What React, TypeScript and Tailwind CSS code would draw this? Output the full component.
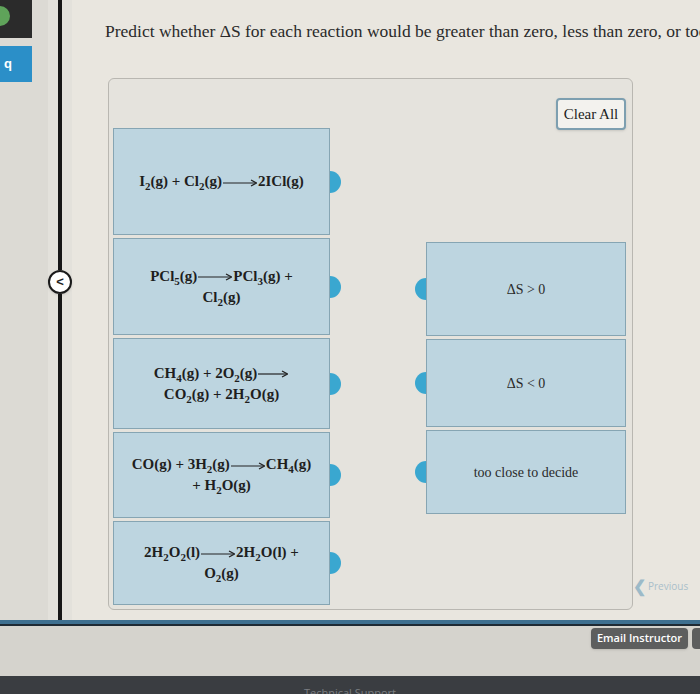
import React from "react";

function Arrow({ w = 34 }: { w?: number }) {
  return (
    <svg width={w} height="8" viewBox={`0 0 ${w} 8`} className="inline-block mx-[1px] align-middle">
      <line x1="0" y1="4" x2={w - 1} y2="4" stroke="#222" strokeWidth="1.2" />
      <path d={`M${w - 6} 1 L${w - 0.5} 4 L${w - 6} 7`} fill="none" stroke="#222" strokeWidth="1.2" />
    </svg>
  );
}

const Sub = ({ children }: { children: React.ReactNode }) => (
  <span className="text-[11px] relative top-[4px] leading-none">{children}</span>
);

type Item = { h: number; body: React.ReactNode };

const reactions: Item[] = [
  {
    h: 107,
    body: (
      <div>
        I<Sub>2</Sub>(g) + Cl<Sub>2</Sub>(g)
        <Arrow />
        2ICl(g)
      </div>
    ),
  },
  {
    h: 97,
    body: (
      <>
        <div>
          PCl<Sub>5</Sub>(g)
          <Arrow />
          PCl<Sub>3</Sub>(g) +
        </div>
        <div>
          Cl<Sub>2</Sub>(g)
        </div>
      </>
    ),
  },
  {
    h: 91,
    body: (
      <>
        <div>
          CH<Sub>4</Sub>(g) + 2O<Sub>2</Sub>(g)
          <Arrow w={30} />
        </div>
        <div>
          CO<Sub>2</Sub>(g) + 2H<Sub>2</Sub>O(g)
        </div>
      </>
    ),
  },
  {
    h: 86,
    body: (
      <>
        <div>
          CO(g) + 3H<Sub>2</Sub>(g)
          <Arrow />
          CH<Sub>4</Sub>(g)
        </div>
        <div>
          + H<Sub>2</Sub>O(g)
        </div>
      </>
    ),
  },
  {
    h: 84,
    body: (
      <>
        <div>
          2H<Sub>2</Sub>O<Sub>2</Sub>(l)
          <Arrow />
          2H<Sub>2</Sub>O(l) +
        </div>
        <div>
          O<Sub>2</Sub>(g)
        </div>
      </>
    ),
  },
];

const targets = [
  { h: 94, label: "ΔS > 0" },
  { h: 88, label: "ΔS < 0" },
  { h: 84, label: "too close to decide" },
];

export default function App() {
  return (
    <div className="w-[700px] h-[694px] flex flex-col overflow-hidden bg-[#e9e6df] font-['Liberation_Serif',serif]">
      <div className="flex h-[620px]">
        {/* sidebar */}
        <div className="w-[48px] flex flex-col bg-[#dcdad4]">
          <div className="w-[32px] h-[38px] bg-[#2b2b2b] flex items-start">
            <div className="w-[10px] h-[20px] mt-[6px] rounded-r-full bg-[#5fa35a]" />
          </div>
          <div className="w-[32px] h-[36px] mt-[8px] bg-[#2b8fc8] flex items-center pl-[4px] text-white font-bold text-[13px] font-['Liberation_Sans',sans-serif]">
            q
          </div>
        </div>
        {/* divider with toggle */}
        <div className="w-[24px] flex flex-col items-center bg-[#e3e1db]">
          <div className="w-[4px] h-[270px] bg-[#161616]" />
          <div className="w-[24px] h-[24px] rounded-full bg-white border-2 border-[#1a1a1a] flex items-center justify-center text-[13px] font-bold text-[#222] font-['Liberation_Sans',sans-serif] shadow">
            &lt;
          </div>
          <div className="w-[4px] flex-1 bg-[#161616]" />
        </div>
        {/* main */}
        <div className="flex-1 flex flex-col pl-[36px] min-w-0">
          <div className="pt-[20px] -ml-[3px] whitespace-nowrap overflow-hidden text-[17.5px] leading-[22px] text-[#2a2a2a]">
            Predict whether ΔS for each reaction would be greater than zero, less than zero, or too close to decide.
          </div>
          <div className="flex mt-[36px]">
            <div className="w-[525px] h-[532px] border border-[#b9b7b1] rounded-md bg-[#e5e3dd] flex">
              {/* left column */}
              <div className="flex flex-col gap-[3px] pt-[49px] pl-[4px]">
                {reactions.map((r, i) => (
                  <div key={i} className="flex items-center">
                    <div
                      className="w-[217px] border border-[#86a5b3] bg-[#bdd5e0] flex flex-col items-center justify-center text-[15px] leading-[21px] font-bold text-[#1e1e1e]"
                      style={{ height: r.h }}
                    >
                      {r.body}
                    </div>
                    <div className="w-[11px] h-[22px] rounded-r-full bg-[#3aa7d0]" />
                  </div>
                ))}
              </div>
              {/* right column */}
              <div className="flex-1 flex flex-col pr-[6px]">
                <button className="self-end mt-[19px] w-[70px] h-[32px] rounded-[4px] border-2 border-[#7d9fb0] bg-[#f3f2ee] text-[15px] text-[#222] shadow-sm">
                  Clear All
                </button>
                <div className="flex flex-col gap-[3px] mt-[112px] items-end">
                  {targets.map((t, i) => (
                    <div key={i} className="flex items-center">
                      <div className="w-[11px] h-[22px] rounded-l-full bg-[#3aa7d0]" />
                      <div
                        className="w-[200px] border border-[#86a5b3] bg-[#bdd5e0] flex items-center justify-center text-[14px] text-[#2a2a2a]"
                        style={{ height: t.h }}
                      >
                        {t.label}
                      </div>
                    </div>
                  ))}
                </div>
              </div>
            </div>
            <div className="flex-1 flex flex-col justify-end pb-[16px]">
              <div className="flex items-center gap-[2px] text-[#a9bfca] text-[10px] font-['Open_Sans',sans-serif]">
                <span className="text-[16px] font-bold text-[#9cbac8] leading-none">❮</span>
                Previous
              </div>
            </div>
          </div>
        </div>
      </div>
      {/* blue rule */}
      <div className="h-[6px] bg-[#3e6f8f] border-b-2 border-[#1f2a33]" />
      {/* footer band */}
      <div className="h-[50px] bg-[#d5d3cd] flex justify-end items-start gap-[4px] pt-[2px]">
        <button className="h-[21px] px-[6px] rounded-[4px] bg-[#5d5e5e] text-white text-[11px] font-semibold font-['Open_Sans',sans-serif] shadow">
          Email Instructor
        </button>
        <div className="w-[8px] h-[21px] rounded-l-[4px] bg-[#5d5e5e]" />
      </div>
      {/* dark band */}
      <div className="flex-1 bg-[#3a3d41] flex justify-center items-end">
        <span className="text-[11px] text-[#7b7e82] leading-none translate-y-[4px] font-['Open_Sans',sans-serif]">
          Technical Support
        </span>
      </div>
    </div>
  );
}
